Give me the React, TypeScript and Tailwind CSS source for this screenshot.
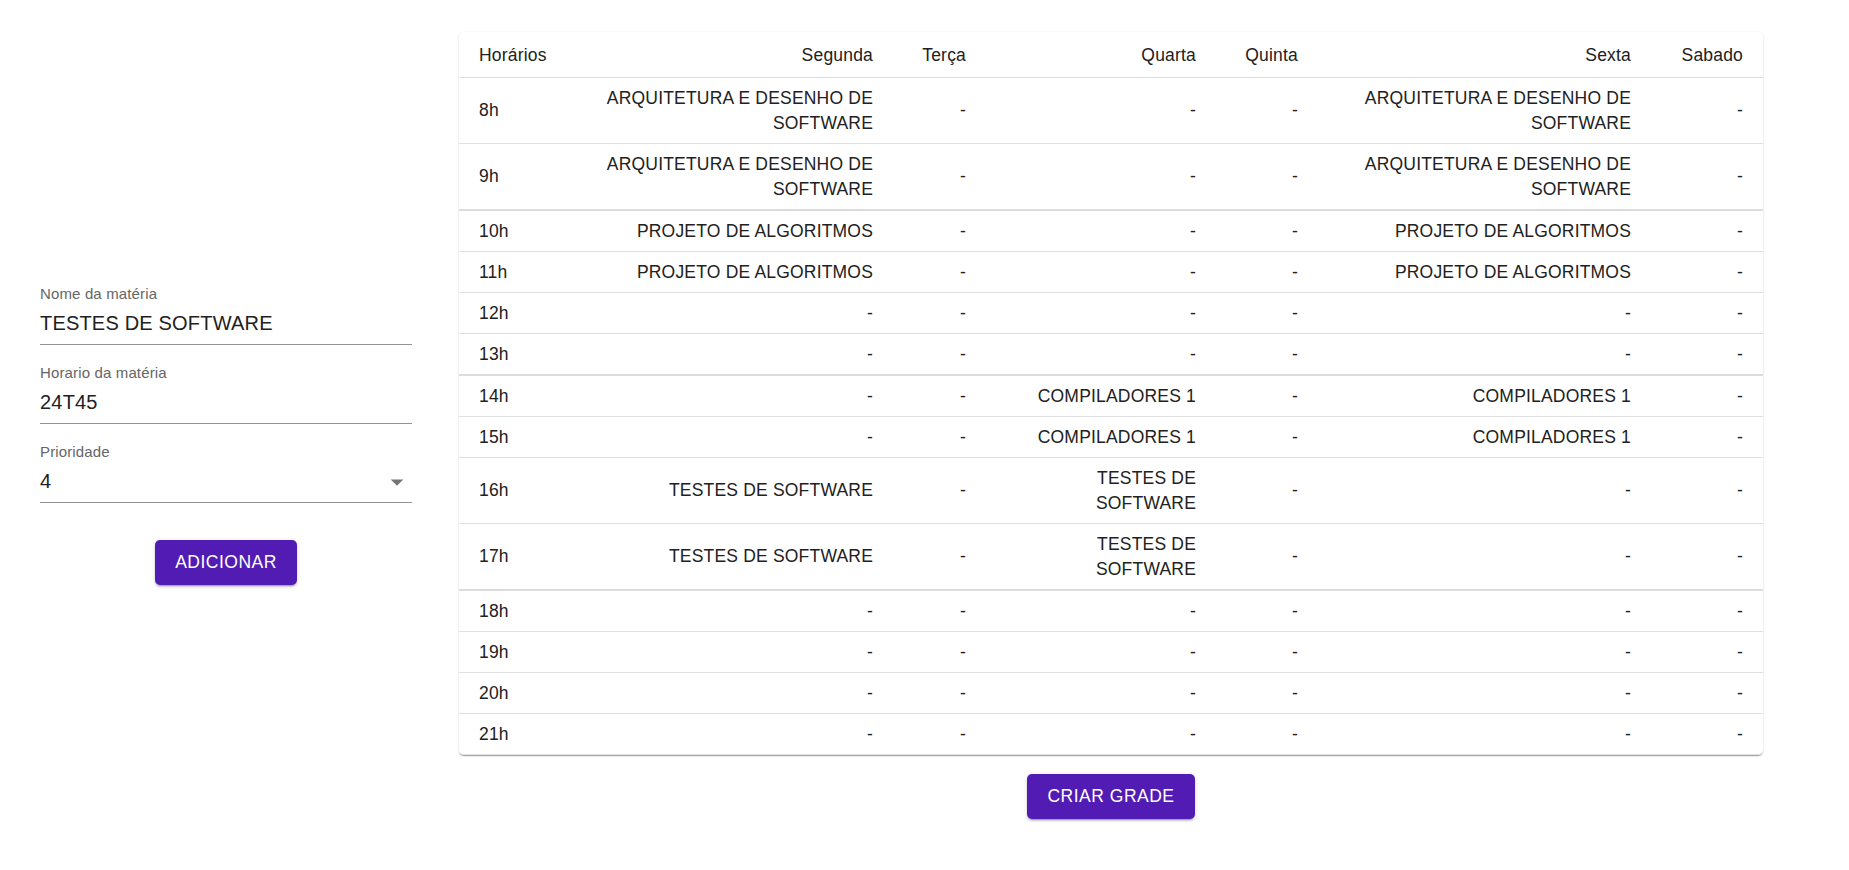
import React from "react";

type Row = {
  hour: string;
  cells: string[];
  divider?: boolean;
};

const ADS = "ARQUITETURA E DESENHO DE SOFTWARE";
const PA = "PROJETO DE ALGORITMOS";
const C1 = "COMPILADORES 1";
const TS = "TESTES DE SOFTWARE";

const days = ["Segunda", "Terça", "Quarta", "Quinta", "Sexta", "Sabado"];

const rows: Row[] = [
  { hour: "8h", cells: [ADS, "-", "-", "-", ADS, "-"] },
  { hour: "9h", cells: [ADS, "-", "-", "-", ADS, "-"], divider: true },
  { hour: "10h", cells: [PA, "-", "-", "-", PA, "-"] },
  { hour: "11h", cells: [PA, "-", "-", "-", PA, "-"] },
  { hour: "12h", cells: ["-", "-", "-", "-", "-", "-"] },
  { hour: "13h", cells: ["-", "-", "-", "-", "-", "-"], divider: true },
  { hour: "14h", cells: ["-", "-", C1, "-", C1, "-"] },
  { hour: "15h", cells: ["-", "-", C1, "-", C1, "-"] },
  { hour: "16h", cells: [TS, "-", TS, "-", "-", "-"] },
  { hour: "17h", cells: [TS, "-", TS, "-", "-", "-"], divider: true },
  { hour: "18h", cells: ["-", "-", "-", "-", "-", "-"] },
  { hour: "19h", cells: ["-", "-", "-", "-", "-", "-"] },
  { hour: "20h", cells: ["-", "-", "-", "-", "-", "-"] },
  { hour: "21h", cells: ["-", "-", "-", "-", "-", "-"] },
];

const Field = ({ label, value, select }: { label: string; value: string; select?: boolean }) => (
  <div className="flex flex-col">
    <label className="text-[15px] leading-[18px] tracking-[0.14px] text-[#666666]">{label}</label>
    <div className="relative mt-[6px] border-b border-[#949494] pb-[7px]">
      <div className="text-[20px] leading-[28px] tracking-[0.19px] text-[#212121]">{value}</div>
      {select && (
        <svg
          viewBox="0 0 24 24"
          className="absolute right-0 top-0 h-[30px] w-[30px] fill-[#757575]"
        >
          <path d="M7 10l5 5 5-5z" />
        </svg>
      )}
    </div>
  </div>
);

const PurpleButton = ({ children }: { children: React.ReactNode }) => (
  <button className="h-[45px] rounded-[5px] bg-[#521cb4] px-5 text-[17.5px] uppercase tracking-[0.5px] text-white shadow-[0px_3px_1px_-2px_rgba(0,0,0,0.2),0px_2px_2px_0px_rgba(0,0,0,0.14),0px_1px_5px_0px_rgba(0,0,0,0.12)]">
    {children}
  </button>
);

export default function App() {
  return (
    <div className="flex min-h-screen bg-white font-['Liberation_Sans',Arial,sans-serif] text-[#212121]">
      <div className="ml-[40px] flex w-[372px] flex-col pt-[285px]">
        <div className="flex flex-col gap-[19px]">
          <Field label="Nome da matéria" value="TESTES DE SOFTWARE" />
          <Field label="Horario da matéria" value="24T45" />
          <Field label="Prioridade" value="4" select />
        </div>
        <div className="mt-[37px] flex justify-center">
          <PurpleButton>Adicionar</PurpleButton>
        </div>
      </div>

      <div className="ml-[47px] flex w-[1304px] flex-col pt-[32px]">
        <div className="overflow-hidden rounded-[5px] bg-white shadow-[0px_2px_1px_-1px_rgba(0,0,0,0.2),0px_1px_1px_0px_rgba(0,0,0,0.14),0px_1px_3px_0px_rgba(0,0,0,0.12)]">
          <table className="w-full table-fixed border-separate border-spacing-0 text-[17.5px] tracking-[0.19px]">
            <colgroup>
              <col className="w-[120px]" />
              <col className="w-[314px]" />
              <col className="w-[93px]" />
              <col className="w-[230px]" />
              <col className="w-[102px]" />
              <col className="w-[333px]" />
              <col className="w-[112px]" />
            </colgroup>
            <thead>
              <tr>
                <th className="border-b border-[#e0e0e0] px-5 py-[7.5px] text-left font-normal leading-[30px]">
                  Horários
                </th>
                {days.map((d) => (
                  <th
                    key={d}
                    className="border-b border-[#e0e0e0] px-5 py-[7.5px] text-right font-normal leading-[30px]"
                  >
                    {d}
                  </th>
                ))}
              </tr>
            </thead>
            <tbody>
              {rows.map((r) => (
                <tr key={r.hour}>
                  <td
                    className={`px-5 py-[7.5px] text-left leading-[25px] ${
                      r.divider ? "border-b-2 border-[#dcdcdc]" : "border-b border-[#e0e0e0]"
                    }`}
                  >
                    {r.hour}
                  </td>
                  {r.cells.map((c, i) => (
                    <td
                      key={i}
                      className={`px-5 py-[7.5px] text-right leading-[25px] ${
                        r.divider ? "border-b-2 border-[#dcdcdc]" : "border-b border-[#e0e0e0]"
                      }`}
                    >
                      {c}
                    </td>
                  ))}
                </tr>
              ))}
            </tbody>
          </table>
        </div>
        <div className="mt-[19px] flex justify-center">
          <PurpleButton>Criar grade</PurpleButton>
        </div>
      </div>
    </div>
  );
}
